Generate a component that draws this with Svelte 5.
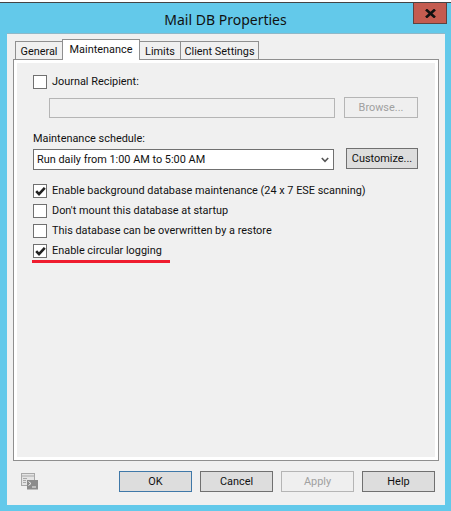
<script>
  const checks = [
    { label: 'Enable background database maintenance (24 x 7 ESE scanning)', on: true },
    { label: "Don't mount this database at startup", on: false },
    { label: 'This database can be overwritten by a restore', on: false },
    { label: 'Enable circular logging', on: true }
  ]
  const tabs = ['General', 'Maintenance', 'Limits', 'Client Settings']
</script>

<div class="desktop">
  <div class="window">
    <div class="titlebar">
      <span class="title">Mail DB Properties</span>
      <div class="close"><svg width="11" height="9" viewBox="0 0 11 9"><path d="M1 0.5 L10 8.5 M10 0.5 L1 8.5" stroke="#111" stroke-width="2.6" fill="none"/></svg></div>
    </div>
    <div class="dialog">
      <div class="tabs">
        {#each tabs as tab}
          <div class="tab" class:active={tab === 'Maintenance'}>{tab}</div>
        {/each}
      </div>
      <div class="panel">
        <div class="inner">
          <label class="check"><span class="box"></span><span class="text">Journal Recipient:</span></label>
          <div class="row recipient">
            <div class="field"></div>
            <div class="btn disabled browse">Browse...</div>
          </div>
          <div class="schedule-label">Maintenance schedule:</div>
          <div class="row schedule">
            <div class="select">
              <span>Run daily from 1:00 AM to 5:00 AM</span>
              <svg width="8" height="6" viewBox="0 0 8 6"><path d="M0.8 1 L4 4.4 L7.2 1" stroke="#555" stroke-width="1.6" fill="none"/></svg>
            </div>
            <div class="btn customize">Customize...</div>
          </div>
          <div class="checks">
            {#each checks as c}
              <label class="check">
                <span class="box">
                  {#if c.on}
                    <svg width="11" height="11" viewBox="0 0 11 11"><path d="M1.2 5.2 L4 8.2 L9.8 1.8" stroke="#222" stroke-width="2.6" fill="none"/></svg>
                  {/if}
                </span><span class="text">{c.label}</span>
              </label>
            {/each}
          </div>
          <div class="underline"></div>
        </div>
      </div>
      <div class="footer">
        <svg class="shell" width="17" height="17" viewBox="0 0 17 17">
          <rect x="0.5" y="0.5" width="13" height="12" fill="#e4e4e4" stroke="#a8a8a8"/>
          <path d="M0.5 3 H13.5" stroke="#a8a8a8"/>
          <path d="M2 5.5 H6 M2 7.5 H5 M2 9.5 H5" stroke="#a8a8a8"/>
          <rect x="6" y="7" width="11" height="9.5" fill="#8c8c8c"/>
          <path d="M7.5 8.5 L10 10.5 L7.5 12.5 M11 14 H15" stroke="#f0f0f0" fill="none"/>
        </svg>
        <div class="btn ok">OK</div>
        <div class="btn">Cancel</div>
        <div class="btn disabled">Apply</div>
        <div class="btn">Help</div>
      </div>
    </div>
  </div>
</div>

<style>
  :global(body) {
    margin: 0;
    background: #fff;
  }

  .desktop {
    width: 451px;
    height: 511px;
    overflow: hidden;
    font-family: Roboto, "Liberation Sans", sans-serif;
    font-size: 10.9px;
    color: #111;
  }

  .window {
    height: 509px;
    margin-top: 2px;
    box-sizing: border-box;
    border-top: 1px solid #444;
    background: #63c9ea;
    display: flex;
    flex-direction: column;
  }

  .titlebar {
    height: 30px;
    flex-shrink: 0;
    display: flex;
    justify-content: center;
    align-items: center;
    position: relative;
  }

  .title {
    font-family: "Noto Sans", sans-serif;
    font-size: 14px;
    margin-top: 3px;
  }

  .close {
    position: absolute;
    top: 0;
    right: 4px;
    width: 34px;
    height: 21px;
    box-sizing: border-box;
    background: #c45c50;
    border: 1px solid #5f4340;
    border-top: none;
    display: flex;
    justify-content: center;
    align-items: center;
  }

  .dialog {
    margin: 0 6px 0 7px;
    height: 472px;
    background: #f0f0f0;
    border-top: 1px solid #8fb8c8;
    box-sizing: border-box;
    padding: 7px 6px 0;
  }

  .tabs {
    display: flex;
    height: 18px;
    align-items: flex-end;
    padding-left: 2px;
    position: relative;
    z-index: 1;
  }

  .tab {
    width: 41px;
    height: 18px;
    box-sizing: border-box;
    border: 1px solid #8f8f8f;
    border-bottom: none;
    border-left: none;
    text-align: center;
    line-height: 20px;
    background: #f0f0f0;
  }

  .tab:first-child {
    width: 47px;
    border-left: 1px solid #8f8f8f;
    border-right: none;
  }

  .tab:last-child {
    width: 78px;
  }

  .tab.active {
    width: 78px;
    height: 21px;
    background: #fff;
    border-left: 1px solid #8f8f8f;
    line-height: 19px;
    margin-bottom: -1px;
  }

  .panel {
    height: 402px;
    width: 426px;
    box-sizing: border-box;
    border: 1px solid #8f8f8f;
    background: #fff;
    padding: 3px;
  }

  .inner {
    height: 100%;
    background: #f0f0f0;
    box-sizing: border-box;
    padding: 9px 16px 0 16px;
  }

  .check {
    display: flex;
    align-items: center;
    gap: 5px;
    height: 20px;
  }

  .text {
    margin-top: -2px;
  }

  .box {
    width: 14px;
    height: 14px;
    box-sizing: border-box;
    background: #fff;
    border: 1px solid #707070;
    display: flex;
    justify-content: center;
    align-items: center;
    flex-shrink: 0;
  }

  .row {
    display: flex;
    align-items: flex-start;
  }

  .recipient {
    margin-top: 5px;
    margin-left: 16px;
    gap: 9px;
  }

  .field {
    width: 286px;
    height: 20px;
    box-sizing: border-box;
    margin-top: 1px;
    border: 1px solid #b5b5b5;
  }

  .schedule-label {
    margin-top: 12px;
    line-height: 17px;
  }

  .schedule {
    margin-top: 2px;
    gap: 12px;
  }

  .select {
    width: 301px;
    height: 21px;
    box-sizing: border-box;
    border: 1px solid #707070;
    background: #fff;
    display: flex;
    justify-content: space-between;
    align-items: center;
    padding: 0 4px 0 3px;
  }

  .btn {
    width: 73px;
    height: 21px;
    box-sizing: border-box;
    border: 1px solid #707070;
    background: #dddddd;
    display: flex;
    justify-content: center;
    align-items: center;
  }

  .btn.disabled {
    border-color: #b5b5b5;
    background: #efefef;
    color: #a0a0a0;
  }

  .browse {
    width: 74px;
  }

  .customize {
    width: 72px;
    margin-top: -1px;
  }

  .checks {
    margin-top: 11px;
  }

  .underline {
    width: 138px;
    height: 3px;
    background: #ef1c2e;
    margin-top: -1px;
    margin-left: -1px;
  }

  .footer {
    display: flex;
    align-items: center;
    gap: 8px;
    margin-top: 10px;
    padding: 0 4px 0 8px;
    width: 426px;
    box-sizing: border-box;
  }

  .shell {
    margin-right: auto;
  }

  .ok {
    border-color: #3f78a8;
  }
</style>
